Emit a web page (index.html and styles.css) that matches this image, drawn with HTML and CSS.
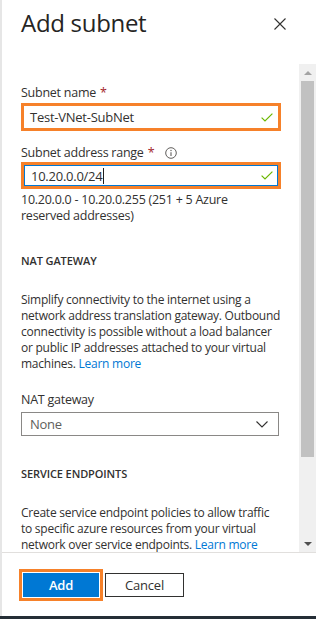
FILE: index.html
```html
<!DOCTYPE html>
<html lang="en">
<head>
<meta charset="utf-8">
<title>Add subnet</title>
<link rel="stylesheet" href="styles.css">
</head>
<body>
<div class="panel">
  <header class="header">
    <h1 class="title">Add subnet</h1>
    <svg class="close" width="12" height="12" viewBox="0 0 12 12"><path d="M0.5 0.5 L11.5 11.5 M11.5 0.5 L0.5 11.5" stroke="#323130" stroke-width="1.1" fill="none"/></svg>
  </header>
  <div class="main">
    <div class="content">
      <div class="label">Subnet name <span class="req">*</span></div>
      <div class="hl hl-first">
        <div class="input">
          <span class="value">Test-VNet-SubNet</span>
          <svg class="check" width="12" height="9" viewBox="0 0 12 9"><path d="M0.6 4.6 L4 8 L11.4 0.6" stroke="#6bb700" stroke-width="1.2" fill="none"/></svg>
        </div>
      </div>
      <div class="label label-2">Subnet address range <span class="req">*</span>
        <svg class="info" width="12" height="12" viewBox="0 0 12 12"><circle cx="6" cy="6" r="5.3" stroke="#605e5c" stroke-width="1" fill="none"/><path d="M6 5.2 V9" stroke="#605e5c" stroke-width="1.1"/><circle cx="6" cy="3.5" r="0.7" fill="#605e5c"/></svg>
      </div>
      <div class="hl hl-second">
        <div class="input input-focus">
          <span class="value">10.20.0.0/24<span class="caret"></span></span>
          <svg class="check" width="12" height="9" viewBox="0 0 12 9"><path d="M0.6 4.6 L4 8 L11.4 0.6" stroke="#6bb700" stroke-width="1.2" fill="none"/></svg>
        </div>
      </div>
      <p class="hint">10.20.0.0 - 10.20.0.255 (251 + 5 Azure<br>reserved addresses)</p>
      <h2 class="section">NAT GATEWAY</h2>
      <p class="desc">Simplify connectivity to the internet using a<br>network address translation gateway. Outbound<br>connectivity is possible without a load balancer<br>or public IP addresses attached to your virtual<br>machines. <a class="link" href="#">Learn more</a></p>
      <div class="label label-3">NAT gateway</div>
      <div class="select">
        <span class="placeholder">None</span>
        <svg class="chev" width="12" height="7" viewBox="0 0 12 7"><path d="M0.5 0.5 L6 6 L11.5 0.5" stroke="#323130" stroke-width="1.1" fill="none"/></svg>
      </div>
      <h2 class="section section-2">SERVICE ENDPOINTS</h2>
      <p class="desc desc-2">Create service endpoint policies to allow traffic<br>to specific azure resources from your virtual<br>network over service endpoints. <a class="link" href="#">Learn more</a></p>
    </div>
    <div class="scrollbar">
      <div class="sb-btn"><span class="tri-up"></span></div>
      <div class="sb-thumb"></div>
      <div class="sb-space"></div>
      <div class="sb-btn"><span class="tri-down"></span></div>
    </div>
  </div>
  <footer class="footer">
    <div class="btn-hl"><button class="btn btn-primary">Add</button></div>
    <button class="btn btn-default">Cancel</button>
  </footer>
  <div class="bottom-bar"></div>
</div>
</body>
</html>
```
FILE: styles.css
```css
* { box-sizing: border-box; }
html, body { margin: 0; padding: 0; }
body {
  width: 316px;
  height: 619px;
  overflow: hidden;
  background: #ffffff;
  font-family: "Open Sans", "Noto Sans", sans-serif;
  font-size: 12.5px;
  letter-spacing: -0.25px;
  color: #323130;
}
.panel {
  display: flex;
  flex-direction: column;
  height: 619px;
  border-left: 2px solid #e6e6e6;
}
.header {
  height: 64px;
  flex: none;
  display: flex;
  justify-content: space-between;
  align-items: flex-start;
  padding: 8px 30px 0 19px;
}
.title {
  margin: 0;
  font-size: 24px;
  line-height: 30px;
  font-weight: 400;
  letter-spacing: -0.3px;
  color: #252423;
}
.close { margin-top: 10px; }
.main {
  height: 488px;
  flex: none;
  display: flex;
}
.content {
  flex: 1;
  overflow: hidden;
  padding: 21px 0 0 19px;
}
.label {
  line-height: 16px;
  height: 16px;
  display: flex;
  align-items: center;
  white-space: nowrap;
}
.req { color: #a4262c; margin-left: 4px; }
.label-2 { margin-top: 14px; }
.label-3 { margin-top: 20px; }
.info { margin-left: 11px; }
.hl {
  width: 260px;
  border: 3px solid #f6812a;
  background: #fff;
}
.hl-first { margin-top: 2px; height: 28px; }
.hl-second { margin-top: 1px; height: 27px; }
.input {
  height: 100%;
  display: flex;
  align-items: center;
  justify-content: space-between;
  padding: 0 5px 0 6px;
  font-size: 13px;
}
.input-focus {
  border: 1px solid #0078d4;
  padding: 0 4px 0 6px;
}
.value { display: flex; align-items: center; }
.caret {
  display: inline-block;
  width: 1px;
  height: 16px;
  background: #201f1e;
  margin-left: 1px;
}
.hint {
  margin: 3px 0 0;
  line-height: 16px;
}
.section {
  margin: 29px 0 0;
  font-size: 11px;
  line-height: 16px;
  font-weight: 600;
  letter-spacing: -0.1px;
  color: #323130;
}
.section-2 { margin-top: 30px; }
.desc {
  margin: 23px 0 0;
  font-size: 12px;
  line-height: 16px;
  white-space: nowrap;
}
.link { color: #0078d4; text-decoration: none; }
.select {
  margin-top: 4px;
  width: 258px;
  height: 24px;
  border: 1px solid #8a8886;
  display: flex;
  align-items: center;
  justify-content: space-between;
  padding: 0 10px 0 8px;
  font-size: 13px;
}
.placeholder { color: #605e5c; }
.scrollbar {
  width: 17px;
  flex: none;
  background: #f0f0f0;
  display: flex;
  flex-direction: column;
}
.sb-btn {
  height: 17px;
  flex: none;
  display: flex;
  align-items: center;
  justify-content: center;
}
.tri-up {
  width: 0; height: 0;
  border-left: 4px solid transparent;
  border-right: 4px solid transparent;
  border-bottom: 4px solid #a3a3a3;
}
.tri-down {
  width: 0; height: 0;
  border-left: 4px solid transparent;
  border-right: 4px solid transparent;
  border-top: 4px solid #505050;
}
.sb-thumb {
  height: 376px;
  margin: 0 2px;
  background: #c1c1c1;
  flex: none;
}
.sb-space { flex: 1; }
.footer {
  height: 64px;
  flex: none;
  border-top: 1px solid #e1dfdd;
  display: flex;
  align-items: center;
  padding-left: 17px;
  gap: 2px;
}
.btn-hl {
  border: 3px solid #f6812a;
  width: 84px;
  height: 32px;
}
.btn {
  font-family: "Open Sans", "Noto Sans", sans-serif;
  font-size: 13px;
  letter-spacing: -0.2px;
  margin: 0;
  padding: 0;
  cursor: pointer;
}
.btn-primary {
  width: 100%;
  height: 100%;
  border: 1px solid #fff;
  background: #0078d4;
  color: #fff;
  font-weight: 600;
}
.btn-default {
  width: 79px;
  height: 24px;
  border: 1px solid #323130;
  background: #fff;
  color: #323130;
}
.bottom-bar {
  height: 3px;
  flex: none;
  background: #252e36;
  margin-left: -2px;
}
```
